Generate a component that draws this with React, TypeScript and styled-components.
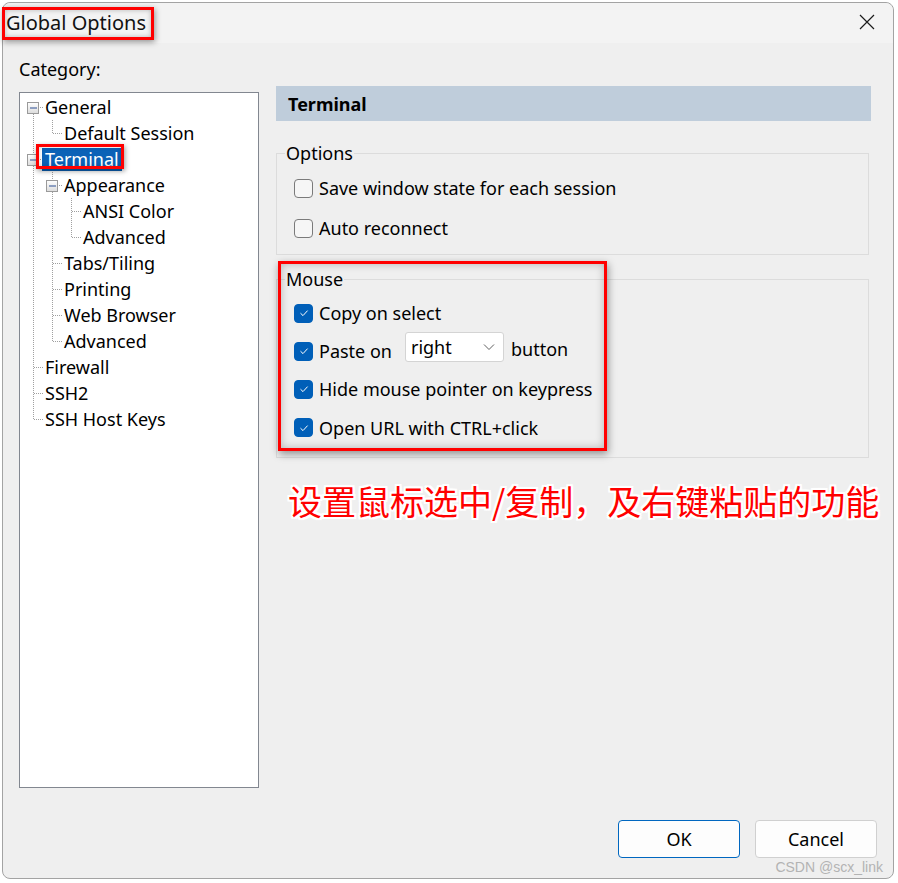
import React from "react";
import styled, { createGlobalStyle } from "styled-components";

const GlobalStyle = createGlobalStyle`
  html, body {
    margin: 0;
    padding: 0;
    background: #ffffff;
  }
  body {
    font-family: "Noto Sans", "Open Sans", sans-serif;
    color: #000;
  }
  * {
    box-sizing: border-box;
  }
`;

const Window = styled.div`
  position: relative;
  width: 892px;
  height: 877px;
  margin: 2px 0 0 2px;
  display: flex;
  flex-direction: column;
  background: #efefef;
  border: 1px solid #a3a3a3;
  border-radius: 8px;
`;

const TitleBar = styled.div`
  height: 40px;
  display: flex;
  justify-content: space-between;
  align-items: flex-start;
  background: #f3f3f3;
  border-radius: 8px 8px 0 0;
`;

const Title = styled.div`
  margin: 4px 0 0 -1px;
  height: 33px;
  padding: 0 5px 0 1px;
  font-size: 20px;
  line-height: 26px;
  color: #111;
  border: 3px solid #ff0000;
  box-shadow: 1px 2px 6px rgba(0, 0, 0, 0.4), inset 0 0 5px rgba(0, 0, 0, 0.25);
`;

const Close = styled.div`
  margin: 11px 18px 0 0;
  width: 16px;
  height: 16px;
  display: flex;
`;

const Body = styled.div`
  display: flex;
  gap: 17px;
  padding-left: 16px;
`;

const LeftColumn = styled.div`
  width: 240px;
  display: flex;
  flex-direction: column;
`;

const CategoryLabel = styled.div`
  margin-top: 14px;
  font-size: 18px;
  line-height: 24px;
`;

const TreeBox = styled.div`
  margin-top: 11px;
  height: 696px;
  padding: 1px 0 0 4px;
  background: #ffffff;
  border: 1px solid #828790;
`;

const TreeRow = styled.div`
  height: 26px;
  display: flex;
  align-items: center;
`;

const TreeCell = styled.svg`
  flex: none;
  width: 19px;
  height: 26px;
`;

const TreeLabel = styled.span<{ $selected?: boolean }>`
  position: relative;
  margin-left: ${(p) => (p.$selected ? "-1px" : "2px")};
  padding: ${(p) => (p.$selected ? "0 3px" : "0")};
  height: 23px;
  font-size: 18px;
  line-height: 23px;
  white-space: nowrap;
  color: ${(p) => (p.$selected ? "#ffffff" : "#000")};
  background: ${(p) => (p.$selected ? "#0b62b7" : "transparent")};

  ${(p) =>
    p.$selected &&
    `
    &::after {
      content: "";
      position: absolute;
      left: -6px;
      top: -4px;
      right: -2px;
      bottom: 2px;
      border: 3px solid #ff0000;
      box-shadow: 1px 2px 5px rgba(0, 0, 0, 0.4), inset 0 0 4px rgba(0, 0, 0, 0.2);
    }
  `}
`;

const RightColumn = styled.div`
  width: 595px;
  display: flex;
  flex-direction: column;
`;

const Header = styled.div`
  margin-top: 43px;
  height: 35px;
  padding-left: 12px;
  display: flex;
  align-items: center;
  background: #bfcddb;
  font-size: 18px;
  font-weight: 700;
`;

const Group = styled.fieldset<{ $top: number; $bottom: number }>`
  position: relative;
  margin: ${(p) => p.$top}px 2px 0 0;
  padding: 0 0 ${(p) => p.$bottom}px 17px;
  border: 1px solid #dcdcdc;
  min-width: 0;
`;

const Legend = styled.legend`
  margin-left: -9px;
  padding: 0 1px;
  font-size: 18px;
  line-height: 24px;
`;

const OptionRow = styled.div<{ $h: number }>`
  height: ${(p) => p.$h}px;
  display: flex;
  align-items: center;
  gap: 6px;
  font-size: 18px;
  white-space: nowrap;
`;

const Check = styled.span<{ $checked?: boolean }>`
  flex: none;
  width: 19px;
  height: 19px;
  display: flex;
  align-items: center;
  justify-content: center;
  border-radius: 4px;
  background: ${(p) => (p.$checked ? "#005fb8" : "#f6f6f6")};
  border: 1px solid ${(p) => (p.$checked ? "#005fb8" : "#7a7a7a")};
`;

const Select = styled.div`
  margin-left: 7px;
  width: 99px;
  height: 30px;
  margin-top: -8px;
  padding: 0 8px 0 5px;
  display: flex;
  align-items: center;
  justify-content: space-between;
  background: #ffffff;
  border: 1px solid #d4d4d4;
  border-radius: 3px;
  font-size: 18px;
`;

const AfterSelect = styled.span`
  margin-left: 1px;
  margin-top: -4px;
`;

const Callout = styled.div`
  position: absolute;
  left: 1px;
  top: -30px;
  width: 329px;
  height: 190px;
  border: 3px solid #ff0000;
  box-shadow: 1px 3px 8px rgba(0, 0, 0, 0.4), inset 0 0 8px rgba(0, 0, 0, 0.25);
  pointer-events: none;
`;

const Note = styled.div`
  margin: 23px 0 0 12px;
  font-family: "Noto Sans CJK SC", "Noto Sans", sans-serif;
  font-size: 34px;
  line-height: 40px;
  color: #ff0000;
  white-space: nowrap;
  text-shadow: 2px 0 0 #fff, -2px 0 0 #fff, 0 2px 0 #fff, 0 -2px 0 #fff, 2px 2px 0 #fff,
    -2px -2px 0 #fff, 2px -2px 0 #fff, -2px 2px 0 #fff, 0 0 4px #fff;
`;

const Footer = styled.div`
  margin-top: auto;
  padding: 0 16px 20px 0;
  display: flex;
  justify-content: flex-end;
  gap: 15px;
`;

const Button = styled.button<{ $primary?: boolean }>`
  width: 122px;
  height: 38px;
  font-family: inherit;
  font-size: 18px;
  color: #000;
  background: #fdfdfd;
  border: 1px solid ${(p) => (p.$primary ? "#0067c0" : "#d0d0d0")};
  border-radius: 4px;
  padding: 0;
`;

const Watermark = styled.div`
  position: absolute;
  right: 10px;
  bottom: 3px;
  font-family: "Liberation Sans", Arial, sans-serif;
  font-size: 14px;
  line-height: 16px;
  color: #b3b3b3;
`;

type Guide = "pipe" | "blank";
type Conn = "first" | "tee" | "end";

interface TreeNode {
  label: string;
  guides: Guide[];
  conn: Conn;
  box?: boolean;
  selected?: boolean;
}

const tree: TreeNode[] = [
  { label: "General", guides: [], conn: "first", box: true },
  { label: "Default Session", guides: ["pipe"], conn: "end" },
  { label: "Terminal", guides: [], conn: "tee", box: true, selected: true },
  { label: "Appearance", guides: ["pipe"], conn: "tee", box: true },
  { label: "ANSI Color", guides: ["pipe", "pipe"], conn: "tee" },
  { label: "Advanced", guides: ["pipe", "pipe"], conn: "end" },
  { label: "Tabs/Tiling", guides: ["pipe"], conn: "tee" },
  { label: "Printing", guides: ["pipe"], conn: "tee" },
  { label: "Web Browser", guides: ["pipe"], conn: "tee" },
  { label: "Advanced", guides: ["pipe"], conn: "end" },
  { label: "Firewall", guides: [], conn: "tee" },
  { label: "SSH2", guides: [], conn: "tee" },
  { label: "SSH Host Keys", guides: [], conn: "end" },
];

const dot = { stroke: "#a0a0a0", strokeWidth: 1, strokeDasharray: "1 1" };

const GuideCell = ({ kind }: { kind: Guide }) => (
  <TreeCell viewBox="0 0 19 26">
    {kind === "pipe" && <line x1="9.5" y1="0" x2="9.5" y2="26" {...dot} />}
  </TreeCell>
);

const ConnCell = ({ conn, box }: { conn: Conn; box?: boolean }) => {
  const y1 = conn === "first" ? 14 : 0;
  const y2 = conn === "end" ? 14 : 26;
  return (
    <TreeCell viewBox="0 0 19 26">
      <defs>
        <linearGradient id="expander" x1="0" y1="0" x2="0" y2="1">
          <stop offset="0" stopColor="#ffffff" />
          <stop offset="1" stopColor="#dcdcdc" />
        </linearGradient>
      </defs>
      <line x1="9.5" y1={y1} x2="9.5" y2={y2} {...dot} />
      <line x1="10" y1="13.5" x2="19" y2="13.5" {...dot} />
      {box && (
        <>
          <rect x="3.5" y="8.5" width="11" height="11" fill="url(#expander)" stroke="#9a9a9a" />
          <line x1="6" y1="14" x2="13" y2="14" stroke="#2d4f93" strokeWidth="1" />
        </>
      )}
    </TreeCell>
  );
};

const CheckMark = () => (
  <svg width="12" height="12" viewBox="0 0 12 12">
    <path d="M2.5 6.2 L5 8.6 L9.6 3.6" fill="none" stroke="#ffffff" strokeWidth="1" />
  </svg>
);

const Checkbox = ({ checked }: { checked?: boolean }) => (
  <Check $checked={checked}>{checked && <CheckMark />}</Check>
);

export default function App() {
  return (
    <>
      <GlobalStyle />
      <Window>
        <TitleBar>
          <Title>Global Options</Title>
          <Close>
            <svg width="16" height="16" viewBox="0 0 16 16">
              <path d="M1 1 L15 15 M15 1 L1 15" stroke="#1b1b1b" strokeWidth="1.2" />
            </svg>
          </Close>
        </TitleBar>

        <Body>
          <LeftColumn>
            <CategoryLabel>Category:</CategoryLabel>
            <TreeBox>
              {tree.map((node, i) => (
                <TreeRow key={i}>
                  {node.guides.map((g, j) => (
                    <GuideCell key={j} kind={g} />
                  ))}
                  <ConnCell conn={node.conn} box={node.box} />
                  <TreeLabel $selected={node.selected}>{node.label}</TreeLabel>
                </TreeRow>
              ))}
            </TreeBox>
          </LeftColumn>

          <RightColumn>
            <Header>Terminal</Header>

            <Group $top={20} $bottom={6}>
              <Legend>Options</Legend>
              <OptionRow $h={40} style={{ marginTop: 3 }}>
                <Checkbox />
                Save window state for each session
              </OptionRow>
              <OptionRow $h={40}>
                <Checkbox />
                Auto reconnect
              </OptionRow>
            </Group>

            <Group $top={12} $bottom={10}>
              <Legend>Mouse</Legend>
              <OptionRow $h={38} style={{ marginTop: 3 }}>
                <Checkbox checked />
                Copy on select
              </OptionRow>
              <OptionRow $h={38}>
                <Checkbox checked />
                Paste on
                <Select>
                  right
                  <svg width="12" height="8" viewBox="0 0 12 8">
                    <path d="M1 1.5 L6 6.5 L11 1.5" fill="none" stroke="#5f5f5f" strokeWidth="1" />
                  </svg>
                </Select>
                <AfterSelect>button</AfterSelect>
              </OptionRow>
              <OptionRow $h={38}>
                <Checkbox checked />
                Hide mouse pointer on keypress
              </OptionRow>
              <OptionRow $h={39}>
                <Checkbox checked />
                Open URL with CTRL+click
              </OptionRow>
              <Callout />
            </Group>

            <Note>设置鼠标选中/复制，及右键粘贴的功能</Note>
          </RightColumn>
        </Body>

        <Footer>
          <Button $primary>OK</Button>
          <Button>Cancel</Button>
        </Footer>

        <Watermark>CSDN @scx_link</Watermark>
      </Window>
    </>
  );
}
